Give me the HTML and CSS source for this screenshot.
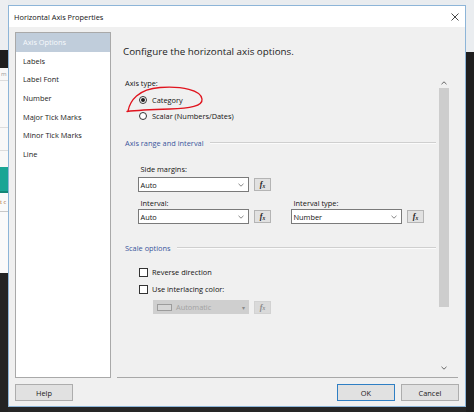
FILE: index.html
```html
<!DOCTYPE html>
<html>
<head>
<meta charset="utf-8">
<link rel="stylesheet" href="styles.css">
</head>
<body>
<div class="desktop">
  <div class="strip strip-left">
    <div class="l-top"></div>
    <div class="l-dark"></div>
    <div class="l-list">
      <div class="l-row l-row1"><span class="l-txt">m</span></div>
      <div class="l-row l-row2"></div>
      <div class="l-row l-row3"></div>
    </div>
    <div class="l-teal"></div>
    <div class="l-white">
      <div class="l-bits">t c</div>
      <div class="l-line"></div>
    </div>
    <div class="l-bottom"></div>
  </div>

  <div class="center">
    <div class="top-gap"></div>
    <div class="dialog">
      <div class="titlebar">
        <span class="title">Horizontal Axis Properties</span>
        <svg class="close" width="8" height="8" viewBox="0 0 8 8"><path d="M0.5 0.5 L7.5 7.5 M7.5 0.5 L0.5 7.5" stroke="#333" stroke-width="0.9" fill="none"/></svg>
      </div>
      <div class="body">
        <div class="nav">
          <div class="nav-item sel">Axis Options</div>
          <div class="nav-item">Labels</div>
          <div class="nav-item">Label Font</div>
          <div class="nav-item">Number</div>
          <div class="nav-item">Major Tick Marks</div>
          <div class="nav-item">Minor Tick Marks</div>
          <div class="nav-item">Line</div>
        </div>
        <div class="main">
          <div class="heading">Configure the horizontal axis options.</div>
          <div class="scroll">
            <div class="content">
              <div class="text-row">Axis type:</div>
              <div class="option first"><span class="radio checked"></span><span>Category</span></div>
              <div class="option"><span class="radio"></span><span>Scalar (Numbers/Dates)</span></div>

              <div class="section s1"><span class="section-title">Axis range and interval</span><span class="section-line"></span></div>

              <div class="fields f1">
                <div class="field">
                  <div class="field-label">Side margins:</div>
                  <div class="field-input">
                    <div class="select"><span>Auto</span><svg class="chev" width="6" height="4" viewBox="0 0 6 4"><path d="M0.5 0.8 L3 3.2 L5.5 0.8" stroke="#666" stroke-width="0.8" fill="none"/></svg></div>
                    <div class="fx"><i>f</i><i class="x">x</i></div>
                  </div>
                </div>
              </div>

              <div class="fields f2">
                <div class="field">
                  <div class="field-label">Interval:</div>
                  <div class="field-input">
                    <div class="select"><span>Auto</span><svg class="chev" width="6" height="4" viewBox="0 0 6 4"><path d="M0.5 0.8 L3 3.2 L5.5 0.8" stroke="#666" stroke-width="0.8" fill="none"/></svg></div>
                    <div class="fx"><i>f</i><i class="x">x</i></div>
                  </div>
                </div>
                <div class="field">
                  <div class="field-label">Interval type:</div>
                  <div class="field-input">
                    <div class="select"><span>Number</span><svg class="chev" width="6" height="4" viewBox="0 0 6 4"><path d="M0.5 0.8 L3 3.2 L5.5 0.8" stroke="#666" stroke-width="0.8" fill="none"/></svg></div>
                    <div class="fx"><i>f</i><i class="x">x</i></div>
                  </div>
                </div>
              </div>

              <div class="section s2"><span class="section-title">Scale options</span><span class="section-line"></span></div>

              <div class="option check c1"><span class="checkbox"></span><span>Reverse direction</span></div>
              <div class="option check c2"><span class="checkbox"></span><span>Use interlacing color:</span></div>

              <div class="color-row">
                <div class="color-select">
                  <span class="swatch"></span>
                  <span class="color-text">Automatic</span>
                  <span class="tri">&#9662;</span>
                </div>
                <div class="fx disabled"><i>f</i><i class="x">x</i></div>
              </div>
            </div>
            <div class="scrollbar">
              <div class="sb-btn"><svg width="6" height="4" viewBox="0 0 6 4"><path d="M0.5 3.2 L3 0.8 L5.5 3.2" stroke="#555" stroke-width="0.9" fill="none"/></svg></div>
              <div class="sb-thumb"></div>
              <div class="sb-track"></div>
              <div class="sb-btn"><svg width="6" height="4" viewBox="0 0 6 4"><path d="M0.5 0.8 L3 3.2 L5.5 0.8" stroke="#555" stroke-width="0.9" fill="none"/></svg></div>
            </div>
          </div>
          <div class="separator"></div>
        </div>
        <div class="footer-left">
          <div class="btn">Help</div>
        </div>
        <div class="footer-right">
          <div class="btn primary">OK</div>
          <div class="btn">Cancel</div>
        </div>
      </div>
    </div>
  </div>

  <div class="strip strip-right">
    <div class="r-top"></div>
    <div class="r-dark"></div>
  </div>

  <svg class="annotation" width="474" height="412" viewBox="0 0 474 412">
    <path d="M128 111 C 130 101, 138 89, 160 87.5 C 182 86, 201 90, 202 99 C 203 106, 190 108.5, 170 109 C 152 109.5, 138 110, 127 111.5" stroke="#e0141e" stroke-width="1.3" fill="none" stroke-linecap="round"/>
  </svg>
</div>
</body>
</html>
```

FILE: styles.css
```css
html, body {
  margin: 0;
  padding: 0;
}

body {
  font-family: "Open Sans", "Noto Sans", sans-serif;
  font-size: 7.4px;
  color: #141414;
  background: #232323;
}

.desktop {
  position: relative;
  width: 474px;
  height: 412px;
  display: flex;
  overflow: hidden;
}

.strip {
  width: 8px;
  display: flex;
  flex-direction: column;
}

.l-top { height: 50px; background: #eceef1; }
.l-dark { height: 18px; background: #1f1f1f; }
.l-list { height: 99px; background: #f8f8f8; display: flex; flex-direction: column; }
.l-row { border-bottom: 1px solid #dcdcdc; }
.l-row1 { height: 12px; }
.l-row2 { height: 46px; }
.l-row3 { height: 22px; }
.l-txt { color: #9a9a9a; font-size: 6px; line-height: 12px; margin-left: 1px; }
.l-teal { height: 24px; background: #1aa595; border-bottom: 2px solid #138777; }
.l-white { height: 80px; background: #fafafa; }
.l-bits { color: #a0622a; font-size: 5.5px; line-height: 12px; margin-top: 3px; white-space: nowrap; }
.l-line { height: 1px; background: #c8c8c8; margin-top: 3px; }
.l-bottom { flex: 1; background: #232323; }

.r-top { height: 52px; background: #eaedf0; }
.r-dark { flex: 1; background: #1f1f1f; }

.center {
  width: 458px;
  display: flex;
  flex-direction: column;
  background: #262626;
}

.top-gap { height: 5px; background: #e9ecef; }

.dialog {
  width: 458px;
  height: 402px;
  box-sizing: border-box;
  border: 1px solid #8db5d8;
  background: #f0f0f0;
  display: flex;
  flex-direction: column;
}

.titlebar {
  height: 21px;
  background: #ffffff;
  display: flex;
  align-items: center;
  justify-content: space-between;
  padding: 0 6px 0 5px;
}

.title { font-size: 7.4px; color: #141414; }
.close { display: block; }

.body {
  flex: 1;
  display: grid;
  grid-template-columns: 96px 1fr;
  grid-template-rows: 346px 1fr;
  padding: 5px 6px 0 6px;
}

.nav {
  box-sizing: border-box;
  border: 1px solid #a9a9a9;
  background: #ffffff;
}

.nav-item {
  height: 18.7px;
  line-height: 18.7px;
  padding-left: 7px;
  color: #1c1c1c;
  white-space: nowrap;
}

.nav-item.sel {
  background: #c0cddb;
  color: #f7f9fb;
}

.main {
  display: flex;
  flex-direction: column;
  padding-left: 12px;
}

.heading {
  margin-top: 14px;
  height: 12px;
  line-height: 12px;
  font-size: 9.8px;
  color: #222;
  white-space: nowrap;
}

.scroll {
  margin-top: 19px;
  height: 296px;
  display: flex;
}

.content {
  flex: 1;
  padding-left: 2px;
  padding-right: 3px;
}

.text-row {
  height: 12px;
  line-height: 12px;
}

.option {
  display: flex;
  align-items: center;
  height: 12px;
  line-height: 12px;
  padding-left: 14px;
  margin-top: 4.5px;
  white-space: nowrap;
}

.radio {
  width: 8px;
  height: 8px;
  box-sizing: border-box;
  border: 1px solid #333;
  border-radius: 50%;
  background: #fff;
  margin-right: 5px;
  display: flex;
  align-items: center;
  justify-content: center;
}

.radio.checked::after {
  content: "";
  width: 4px;
  height: 4px;
  border-radius: 50%;
  background: #1e1e1e;
}

.section {
  display: flex;
  align-items: center;
  height: 12px;
  line-height: 12px;
}

.s1 { margin-top: 15px; }
.s2 { margin-top: 18px; }

.section-title {
  color: #3a569c;
  white-space: nowrap;
  margin-right: 6px;
}

.section-line {
  flex: 1;
  height: 1px;
  background: #cfcfcf;
  border-bottom: 1px solid #fbfbfb;
}

.fields {
  display: flex;
  gap: 20px;
  padding-left: 13px;
}

.f1 { margin-top: 15px; }
.f2 { margin-top: 6px; }

.field-label {
  height: 11px;
  line-height: 11px;
  padding-left: 2.5px;
  white-space: nowrap;
}

.f1 .field-input { margin-top: 2px; }

.field-input {
  display: flex;
  align-items: center;
  gap: 5px;
}

.select {
  width: 111px;
  height: 15px;
  box-sizing: border-box;
  border: 1px solid #7a7a7a;
  background: #fff;
  display: flex;
  align-items: center;
  justify-content: space-between;
  padding: 0 4px 0 1.5px;
}

.chev { display: block; }

.fx {
  width: 17px;
  height: 13px;
  box-sizing: border-box;
  border: 1px solid #b4b4b4;
  background: #e1e1e1;
  display: flex;
  align-items: center;
  justify-content: center;
  font-family: "Liberation Serif", "DejaVu Serif", serif;
  font-weight: bold;
  font-size: 8px;
  color: #1a1a1a;
}

.fx .x { font-size: 5.5px; margin-top: 2px; }

.fx.disabled {
  background: #dadada;
  border-color: #d2d2d2;
  color: #8a8a8a;
}

.check.c1 { margin-top: 12px; }
.check.c2 { margin-top: 5px; }

.checkbox {
  width: 9px;
  height: 9px;
  box-sizing: border-box;
  border: 1px solid #333;
  background: #fff;
  margin-right: 4px;
}

.color-row {
  display: flex;
  align-items: center;
  gap: 5px;
  padding-left: 28px;
  margin-top: 5px;
}

.color-select {
  width: 96px;
  height: 14px;
  box-sizing: border-box;
  background: #cfcfcf;
  display: flex;
  align-items: center;
  padding: 0 4px 0 4px;
}

.swatch {
  width: 15px;
  height: 7px;
  box-sizing: border-box;
  border: 1px solid #9c9c9c;
  background: #d6d6d6;
  margin-right: 4px;
}

.color-text {
  flex: 1;
  color: #a2a2a2;
}

.tri {
  color: #8a8a8a;
  font-size: 6px;
  font-family: "DejaVu Sans", sans-serif;
}

.scrollbar {
  width: 10px;
  margin-right: 10px;
  display: flex;
  flex-direction: column;
}

.sb-btn {
  height: 11px;
  display: flex;
  align-items: center;
  justify-content: center;
}

.sb-thumb {
  height: 219px;
  background: #cdcdcd;
}

.sb-track {
  flex: 1;
}

.separator {
  margin: 4px 1px 0 -6px;
  height: 1px;
  background: #a8a8a8;
}

.footer-left,
.footer-right {
  display: flex;
  align-items: flex-start;
  padding-top: 6px;
}

.footer-right {
  justify-content: flex-end;
  gap: 6px;
}

.btn {
  width: 58px;
  height: 17px;
  box-sizing: border-box;
  border: 1px solid #adadad;
  background: #e1e1e1;
  display: flex;
  align-items: center;
  justify-content: center;
  color: #1a1a1a;
}

.btn.primary {
  border-color: #2f7fc4;
}

.annotation {
  position: absolute;
  left: 0;
  top: 0;
  pointer-events: none;
}
```
